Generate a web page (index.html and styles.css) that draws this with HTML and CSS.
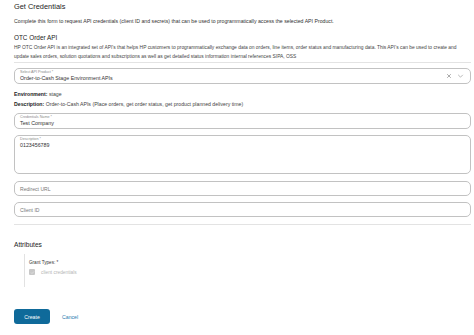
FILE: index.html
```html
<!DOCTYPE html>
<html lang="en">
<head>
  <meta charset="UTF-8">
  <title>Get Credentials</title>
  <link rel="stylesheet" href="styles.css">
</head>
<body>

<div class="page">
  <!-- header -->
  <h1 class="page-title">Get Credentials</h1>
  <p class="intro">Complete this form to request API credentials (client ID and secrets) that can be used to programmatically access the selected API Product.</p>

  <h2 class="api-title">OTC Order API</h2>
  <p class="api-text">HP OTC Order API is an integrated set of API's that helps HP customers to programmatically exchange data on orders, line items, order status and manufacturing data. This API's can be used to create and update sales orders, solution quotations and subscriptions as well as get detailed status information internal references SIPA, OSS</p>

  <hr class="divider">

  <!-- product select -->
  <div class="field select-field">
    <div class="field-body">
      <div class="field-label">Select API Product *</div>
      <div class="field-value">Order-to-Cash Stage Environment APIs</div>
    </div>
    <div class="select-icons">
      <svg width="6" height="6" viewBox="0 0 10 10"><path d="M2 2 L8 8 M8 2 L2 8" stroke="#8a8a8a" stroke-width="1.2" fill="none"/></svg>
      <svg width="7" height="6" viewBox="0 0 12 10"><path d="M2 3 L6 7 L10 3" stroke="#9a9a9a" stroke-width="1.2" fill="none"/></svg>
    </div>
  </div>

  <div class="meta"><b>Environment:</b> stage</div>
  <div class="meta"><b>Description:</b> Order-to-Cash APIs (Place orders, get order status, get product planned delivery time)</div>

  <div class="field">
    <div class="field-label">Credentials Name *</div>
    <div class="field-value">Test Company</div>
  </div>

  <div class="field textarea-field">
    <div class="field-label">Description *</div>
    <div class="field-value">0123456789</div>
  </div>

  <div class="field empty-field">
    <div class="placeholder">Redirect URL</div>
  </div>

  <div class="field empty-field">
    <div class="placeholder">Client ID</div>
  </div>

  <hr class="divider lower">

  <!-- attributes -->
  <h3 class="attr-title">Attributes</h3>
  <div class="attr-group">
    <div class="attr-label">Grant Types: *</div>
    <div class="check-row">
      <span class="checkbox">
        <svg width="5" height="5" viewBox="0 0 10 10"><path d="M2 5 L4 7 L8 3" stroke="#e6e6e6" stroke-width="1.4" fill="none"/></svg>
      </span>
      <span class="check-text">client credentials</span>
    </div>
  </div>

  <div class="actions">
    <button class="btn-create">Create</button>
    <a class="btn-cancel" href="#">Cancel</a>
  </div>
</div>

</body>
</html>
```

FILE: styles.css
```css
/* page */
body {
  margin: 0;
  background: #fff;
  color: #2b2b2b;
  font-family: "Liberation Sans", Arial, sans-serif;
}
.page {
  padding: 0 3px 0 14px;
}

/* header */
.page-title {
  margin: 0;
  padding-top: 1px;
  font-size: 7.4px;
  line-height: 12px;
  font-weight: normal;
  color: #222;
}
.intro {
  margin: 4px 0 0;
  font-size: 5.2px;
  line-height: 9px;
  color: #333;
}
.api-title {
  margin: 6px 0 0;
  font-size: 6.4px;
  line-height: 11px;
  font-weight: normal;
  color: #222;
}
.api-text {
  margin: 0;
  font-size: 4.9px;
  line-height: 9px;
  color: #444;
}
.divider {
  border: 0;
  border-top: 1px solid #e3e3e3;
  margin: 1px 0 5px;
}
.divider.lower {
  margin: 7px 0 0;
}

/* fields */
.field {
  border: 1px solid #c2c2c2;
  border-radius: 5px;
  height: 16px;
  box-sizing: border-box;
  padding: 1px 5px;
  margin-bottom: 6px;
}
.field-label {
  font-size: 3.7px;
  line-height: 5px;
  color: #8a8a8a;
}
.field-value {
  font-size: 5.3px;
  line-height: 7px;
  color: #333;
}
.select-field {
  display: flex;
  align-items: center;
  margin-bottom: 5px;
}
.field-body {
  flex: 1;
}
.select-icons {
  display: flex;
  gap: 5px;
  align-items: center;
  padding-right: 1px;
}
.textarea-field {
  height: 39px;
  margin-top: 6px;
  margin-bottom: 7px;
}
.empty-field {
  display: flex;
  align-items: center;
  height: 15px;
}
.placeholder {
  font-size: 5.1px;
  color: #777;
}

/* env / description */
.meta {
  font-size: 5.2px;
  line-height: 10px;
  color: #444;
}
.meta b {
  color: #222;
}
.meta + .field {
  margin-top: 4px;
}

/* attributes */
.attr-title {
  margin: 16px 0 0;
  font-size: 6.6px;
  line-height: 8px;
  font-weight: normal;
  color: #222;
}
.attr-group {
  margin: 5px 0 0 10px;
  border-left: 1px solid #e2e2e2;
  padding: 5px 0 12px 4px;
}
.attr-label {
  font-size: 4.6px;
  line-height: 7px;
  color: #333;
}
.check-row {
  display: flex;
  align-items: center;
  gap: 6px;
  margin-top: 3px;
}
.checkbox {
  width: 6px;
  height: 6px;
  background: #c8c8c8;
  border-radius: 1px;
  display: flex;
  align-items: center;
  justify-content: center;
}
.check-text {
  font-size: 4.8px;
  color: #b5b5b5;
}

/* buttons */
.actions {
  display: flex;
  align-items: center;
  gap: 12px;
  margin-top: 22px;
}
.btn-create {
  width: 36px;
  height: 15px;
  border: 0;
  border-radius: 3px;
  background: #0f6a9a;
  color: #fff;
  font-family: inherit;
  font-size: 5.2px;
  padding: 0;
}
.btn-cancel {
  font-size: 5.2px;
  color: #2a7bb0;
  text-decoration: none;
}
```
